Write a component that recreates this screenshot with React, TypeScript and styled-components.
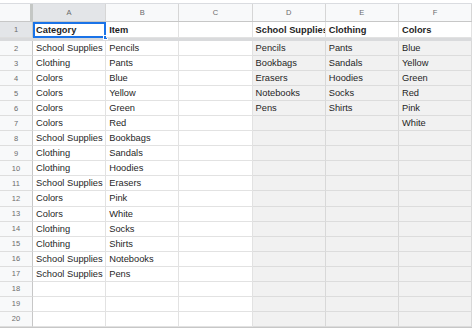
import React from "react";
import styled, { createGlobalStyle } from "styled-components";

const GlobalStyle = createGlobalStyle`
  html, body {
    margin: 0;
    padding: 0;
    background: #ffffff;
  }
`;

const COLS = "33px repeat(6, 73.2px)";

const Page = styled.div`
  width: 474px;
  height: 329px;
  background: #ffffff;
  overflow: hidden;
  font-family: Arial, "Liberation Sans", sans-serif;
  padding-top: 3px;
  box-sizing: border-box;
`;

const Sheet = styled.div`
  display: flex;
  flex-direction: column;
  width: 472.2px;
  border-bottom: 1px solid #c7c7c7;
`;

const HeaderRow = styled.div`
  display: grid;
  grid-template-columns: ${COLS};
  height: 17px;
  background: #f8f9fa;
  border-top: 1px solid #dadce0;
  border-bottom: 1px solid #c7c7c7;
`;

const Corner = styled.div`
  background: #f8f9fa;
  border-right: 3px solid #c4c7c5;
  box-sizing: border-box;
`;

const ColLabel = styled.div<{ $active?: boolean }>`
  display: flex;
  align-items: center;
  justify-content: center;
  font-size: 7.5px;
  color: #6b6b6b;
  background: ${(p) => (p.$active ? "#e3e5e8" : "#f8f9fa")};
  border-right: 1px solid #d6d6d6;
  box-sizing: border-box;
`;

const Row = styled.div<{ $h: number }>`
  display: grid;
  grid-template-columns: ${COLS};
  height: ${(p) => p.$h}px;
`;

const FreezeBar = styled.div`
  height: 3px;
  background: #d9dadc;
`;

const RowLabel = styled.div<{ $active?: boolean }>`
  display: flex;
  align-items: center;
  justify-content: center;
  font-size: 7.5px;
  color: #6b6b6b;
  background: ${(p) => (p.$active ? "#e3e5e8" : "#f8f9fa")};
  border-right: 1px solid #c7c7c7;
  border-bottom: 1px solid #dedede;
  box-sizing: border-box;
`;

const Cell = styled.div<{ $shaded?: boolean; $bold?: boolean; $selected?: boolean }>`
  position: relative;
  display: flex;
  align-items: center;
  padding-left: 3px;
  font-size: 9.3px;
  font-weight: ${(p) => (p.$bold ? 700 : 400)};
  color: #1f1f1f;
  white-space: nowrap;
  overflow: ${(p) => (p.$selected ? "visible" : "hidden")};
  background: ${(p) => (p.$shaded ? "#f1f1f1" : "#ffffff")};
  border-right: 1px solid ${(p) => (p.$shaded ? "#d8d8d8" : "#e2e2e2")};
  border-bottom: 1px solid ${(p) => (p.$shaded ? "#dcdcdc" : "#e2e2e2")};
  box-sizing: border-box;
  ${(p) =>
    p.$selected &&
    `
    outline: 2px solid #1a73e8;
    outline-offset: -2px;
  `}
`;

const Handle = styled.span`
  position: absolute;
  right: -3px;
  bottom: -3px;
  width: 5px;
  height: 5px;
  background: #1a73e8;
  border: 1px solid #ffffff;
  box-sizing: border-box;
`;

const left: [string, string][] = [
  ["School Supplies", "Pencils"],
  ["Clothing", "Pants"],
  ["Colors", "Blue"],
  ["Colors", "Yellow"],
  ["Colors", "Green"],
  ["Colors", "Red"],
  ["School Supplies", "Bookbags"],
  ["Clothing", "Sandals"],
  ["Clothing", "Hoodies"],
  ["School Supplies", "Erasers"],
  ["Colors", "Pink"],
  ["Colors", "White"],
  ["Clothing", "Socks"],
  ["Clothing", "Shirts"],
  ["School Supplies", "Notebooks"],
  ["School Supplies", "Pens"],
];

const right: [string, string, string][] = [
  ["Pencils", "Pants", "Blue"],
  ["Bookbags", "Sandals", "Yellow"],
  ["Erasers", "Hoodies", "Green"],
  ["Notebooks", "Socks", "Red"],
  ["Pens", "Shirts", "Pink"],
  ["", "", "White"],
];

const letters = ["A", "B", "C", "D", "E", "F"];

export default function App() {
  const bodyRows = Array.from({ length: 19 }, (_, i) => i + 2);
  return (
    <Page>
      <GlobalStyle />
      <Sheet>
        <HeaderRow>
          <Corner />
          {letters.map((l) => (
            <ColLabel key={l} $active={l === "A"}>
              {l}
            </ColLabel>
          ))}
        </HeaderRow>
        <Row $h={16}>
          <RowLabel $active>1</RowLabel>
          <Cell $bold $selected>
            Category
            <Handle />
          </Cell>
          <Cell $bold>Item</Cell>
          <Cell />
          <Cell $bold>School Supplies</Cell>
          <Cell $bold>Clothing</Cell>
          <Cell $bold>Colors</Cell>
        </Row>
        <FreezeBar />
        {bodyRows.map((n) => {
          const l = left[n - 2] || ["", ""];
          const r = right[n - 2] || ["", "", ""];
          return (
            <Row key={n} $h={15.05}>
              <RowLabel>{n}</RowLabel>
              <Cell>{l[0]}</Cell>
              <Cell>{l[1]}</Cell>
              <Cell />
              <Cell $shaded>{r[0]}</Cell>
              <Cell $shaded>{r[1]}</Cell>
              <Cell $shaded>{r[2]}</Cell>
            </Row>
          );
        })}
      </Sheet>
    </Page>
  );
}
